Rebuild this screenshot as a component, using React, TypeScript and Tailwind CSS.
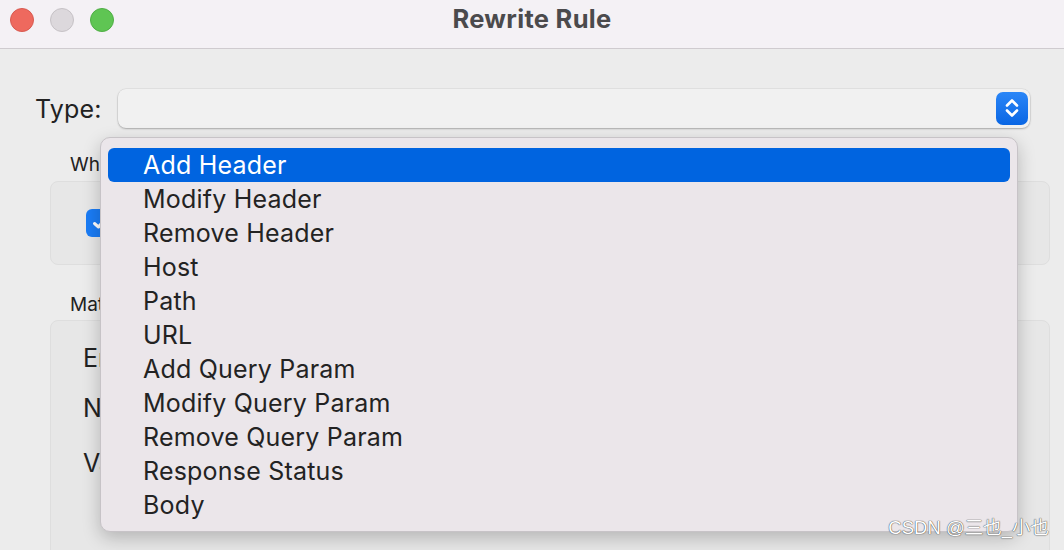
import { useState } from "react";

const items = [
  "Add Header",
  "Modify Header",
  "Remove Header",
  "Host",
  "Path",
  "URL",
  "Add Query Param",
  "Modify Query Param",
  "Remove Query Param",
  "Response Status",
  "Body",
];

function Stepper() {
  return (
    <div className="w-[32px] h-[33px] rounded-[7px] bg-gradient-to-b from-[#2a86f7] to-[#0866e4] flex items-center justify-center">
      <svg width="16" height="24" viewBox="0 0 16 24" fill="none" stroke="white" strokeWidth="2.6" strokeLinecap="round" strokeLinejoin="round">
        <path d="M3 9.5 L8 4.5 L13 9.5" />
        <path d="M3 14.5 L8 19.5 L13 14.5" />
      </svg>
    </div>
  );
}

export default function App() {
  const [selected, setSelected] = useState(0);

  return (
    <div className="relative w-[1064px] h-[550px] overflow-hidden bg-[#ececec] text-[#222] font-['Inter','Liberation_Sans',sans-serif]">
      {/* title bar */}
      <div className="h-[49px] grid grid-cols-[1fr_auto_1fr] items-center bg-[#f4f1f5] border-b border-[#cfcbcf]">
        <div className="flex items-center gap-4 pl-[10px] -mt-[8px]">
          <span className="w-6 h-6 rounded-full bg-[#ee695e] border border-[#d85a50]" />
          <span className="w-6 h-6 rounded-full bg-[#dcd8dc] border border-[#c6c2c6]" />
          <span className="w-6 h-6 rounded-full bg-[#5fc553] border border-[#4fae45]" />
        </div>
        <div className="text-[25.5px] font-bold text-[#4b4a4c] -mt-[10px] tracking-[0.3px]">
          Rewrite Rule
        </div>
        <div />
      </div>

      {/* form */}
      <div className="pt-[39px] pl-[35px] pr-[34px]">
        <div className="flex items-center">
          <span className="text-[25px] w-[83px] tracking-[0.2px] pt-[3px]">Type:</span>
          <div className="flex-1 h-[39px] rounded-[8px] bg-[#f1f1f1] shadow-[0_1px_2px_rgba(0,0,0,0.25),0_0_0_0.5px_rgba(0,0,0,0.08)] flex items-center justify-end pr-[2px]">
            <Stepper />
          </div>
        </div>

        <div className="mt-[23px] ml-[15px] -mr-[20px]">
          <div className="pl-[20px] text-[19px] leading-[26px]">When</div>
          <div className="mt-[3px] h-[84px] rounded-[8px] bg-[#e7e7e7] border border-[#dedede] flex items-center pl-[35px]">
            <span className="w-[28px] h-[28px] rounded-[6px] bg-[#1a7cf5] flex items-center justify-center">
              <svg width="18" height="18" viewBox="0 0 18 18" fill="none" stroke="white" strokeWidth="3" strokeLinecap="round" strokeLinejoin="round">
                <path d="M3.5 9.5 L7.5 13 L14.5 4.5" />
              </svg>
            </span>
          </div>

          <div className="mt-[27px] pl-[20px] text-[19px] leading-[26px]">Match</div>
          <div className="mt-[2px] h-[260px] rounded-[8px] bg-[#e7e7e7] border border-[#dedede] pl-[32px] pt-[24px] text-[25px]">
            <div className="flex items-center h-[28px] gap-4">
              <span className="w-[48px]">Enable</span>
            </div>
            <div className="flex items-center h-[28px] mt-[22px] gap-4">
              <span className="w-[48px]">Name</span>
              <span className="w-[26px] h-[52px] rounded-[4px] bg-[#ebebeb]" />
            </div>
            <div className="flex items-center h-[28px] mt-[27px]">
              <span>Value</span>
            </div>
          </div>
        </div>
      </div>

      {/* open popup menu */}
      <div className="absolute left-[100px] top-[137px] w-[918px] h-[395px] rounded-[10px] bg-[#ebe6ea] border border-[#c7c3c7] shadow-[0_6px_18px_rgba(0,0,0,0.22)] pt-[10px] px-[7px]">
        {items.map((item, i) => (
          <div
            key={item}
            onMouseEnter={() => setSelected(i)}
            className={
              i === selected
                ? "h-[34px] rounded-[6px] bg-[#0064e0] text-white pl-[35px] pt-[2px] flex items-center text-[25px] tracking-[0.2px]"
                : "h-[34px] rounded-[6px] text-[#232323] pl-[35px] pt-[2px] flex items-center text-[25px] tracking-[0.2px]"
            }
          >
            {item}
          </div>
        ))}
      </div>

      {/* watermark */}
      <div className="absolute right-[15px] bottom-[8px] text-[18.5px] text-white font-['Liberation_Sans','Noto_Sans_CJK_SC',sans-serif] [text-shadow:0_0_1px_#444,0_0_1px_#444]">
        CSDN @三也_小也
      </div>
    </div>
  );
}
